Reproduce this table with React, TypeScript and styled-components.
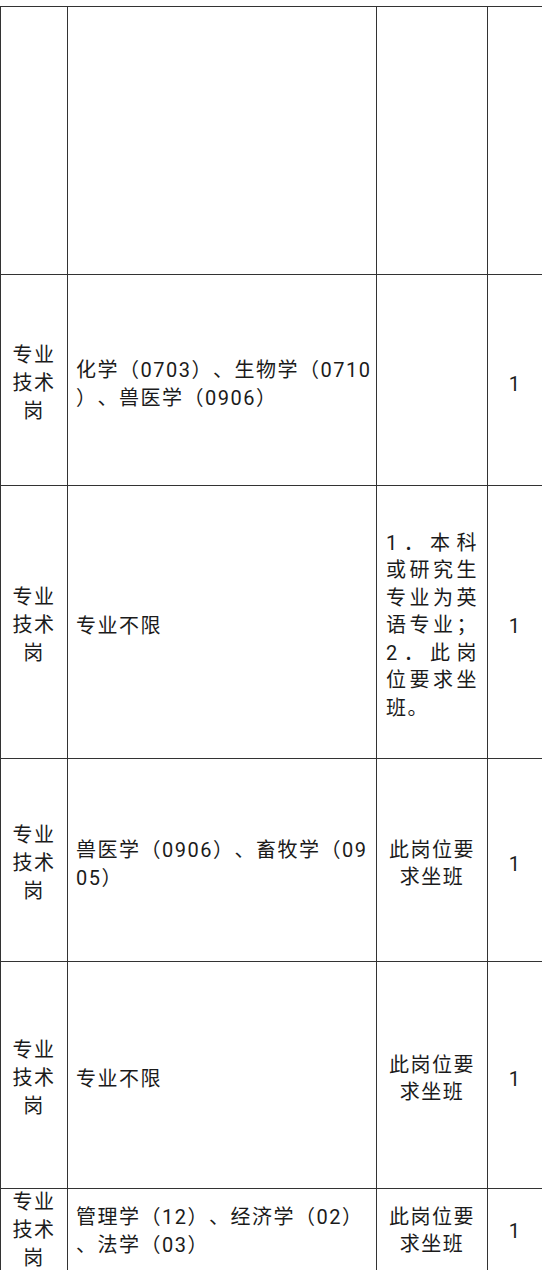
import React from "react";
import styled, { createGlobalStyle } from "styled-components";

const Global = createGlobalStyle`
  html, body {
    margin: 0;
    padding: 0;
    background: #ffffff;
  }
  body {
    font-family: Roboto, "Noto Sans CJK SC", "Noto Sans", sans-serif;
    color: #1e1e1e;
  }
`;

const Table = styled.table`
  margin-top: 6px;
  width: 542px;
  table-layout: fixed;
  border-collapse: collapse;
  font-family: Roboto, "Noto Sans CJK SC", sans-serif;
  font-size: 20px;
  letter-spacing: 1.5px;
  color: #1b1b1b;
  text-spacing-trim: space-all;
`;

const Col = styled.col<{ $w: number }>`
  width: ${(p) => p.$w}px;
`;

const Row = styled.tr<{ $h: number; $pt: number }>`
  height: ${(p) => p.$h}px;
  & > td {
    padding-top: ${(p) => p.$pt}px;
  }
`;

const BaseCell = styled.td`
  border: 1.5px solid #333333;
  vertical-align: middle;
  padding: 0;
  word-break: break-all;
  line-break: anywhere;
  text-spacing-trim: space-all;
`;

const PostCell = styled(BaseCell)`
  padding: 0 6px;
  text-align: center;
  line-height: 27.7px;
`;

const MajorCell = styled(BaseCell)`
  padding: 0 2px 0 8px;
  text-align: left;
  line-height: 28px;
`;

const NoteCell = styled(BaseCell)<{ $justify?: boolean }>`
  padding: 0 9px;
  text-align: ${(p) => (p.$justify ? "justify" : "center")};
  line-height: 27.5px;
`;

const CountCell = styled(BaseCell)`
  text-align: center;
  line-height: 28px;
`;

type RowData = {
  h: number;
  pt: number;
  post: string;
  major: string;
  note: string;
  justify?: boolean;
  count: string;
};

const rows: RowData[] = [
  { h: 268, pt: 8, post: "", major: "", note: "", count: "" },
  {
    h: 211,
    pt: 8,
    post: "专业技术岗",
    major: "化学（0703）、生物学（0710）、兽医学（0906）",
    note: "",
    count: "1",
  },
  {
    h: 273,
    pt: 8,
    post: "专业技术岗",
    major: "专业不限",
    note: "1．本科或研究生专业为英语专业；2．此岗位要求坐班。",
    justify: true,
    count: "1",
  },
  {
    h: 203,
    pt: 8,
    post: "专业技术岗",
    major: "兽医学（0906）、畜牧学（0905）",
    note: "此岗位要求坐班",
    count: "1",
  },
  {
    h: 227,
    pt: 8,
    post: "专业技术岗",
    major: "专业不限",
    note: "此岗位要求坐班",
    count: "1",
  },
  {
    h: 85,
    pt: 0,
    post: "专业技术岗",
    major: "管理学（12）、经济学（02）、法学（03）",
    note: "此岗位要求坐班",
    count: "1",
  },
];

export default function App() {
  return (
    <>
      <Global />
      <Table>
        <colgroup>
          <Col $w={67} />
          <Col $w={309} />
          <Col $w={111} />
          <Col $w={55} />
        </colgroup>
        <tbody>
          {rows.map((r, i) => (
            <Row key={i} $h={r.h} $pt={r.pt}>
              <PostCell>{r.post}</PostCell>
              <MajorCell>{r.major}</MajorCell>
              <NoteCell $justify={r.justify}>{r.note}</NoteCell>
              <CountCell>{r.count}</CountCell>
            </Row>
          ))}
        </tbody>
      </Table>
    </>
  );
}
